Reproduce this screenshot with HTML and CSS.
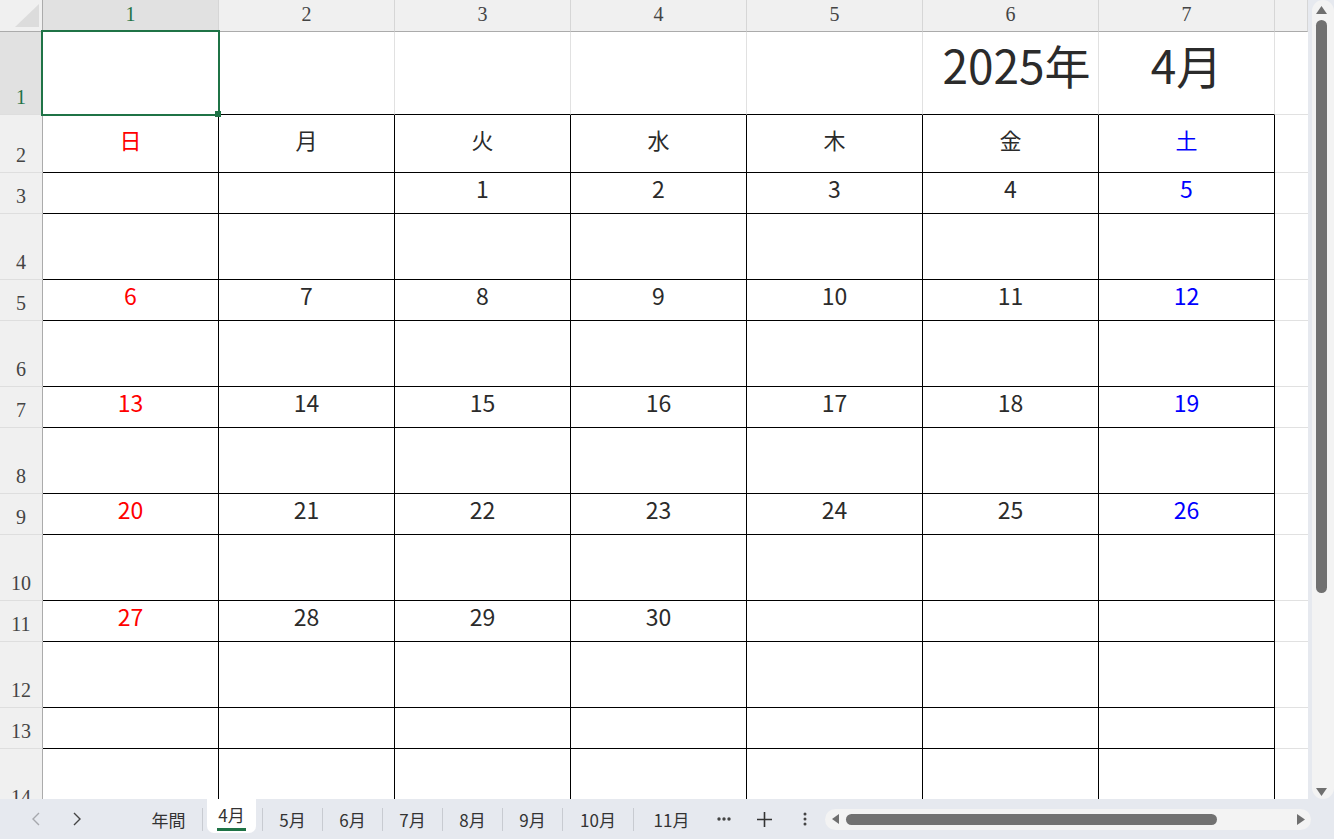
FILE: index.html
```html
<!DOCTYPE html>
<html lang="ja">
<head>
<meta charset="utf-8">
<title>カレンダー 2025年4月</title>
<link rel="stylesheet" href="styles.css">
</head>
<body>
<div class="app">
  <div class="main">
    <div class="sheet">
      <div class="corner"><svg width="24" height="23" viewBox="0 0 24 23"><polygon points="0,23 24,23 24,0" fill="#dcdcdc"/></svg></div>
      <div class="ch sel">1</div><div class="ch">2</div><div class="ch">3</div><div class="ch">4</div><div class="ch">5</div><div class="ch">6</div><div class="ch">7</div><div class="ch"></div>

      <div class="rh sel">1</div>
      <div class="c top"></div><div class="c top"></div><div class="c top"></div><div class="c top"></div><div class="c top"></div>
      <div class="c top title yr">2025年</div><div class="c top title">4月</div><div class="c x"></div>

      <div class="rh">2</div>
      <div class="c cal wd sun">日</div><div class="c cal wd">月</div><div class="c cal wd">火</div><div class="c cal wd">水</div><div class="c cal wd">木</div><div class="c cal wd">金</div><div class="c cal wd sat">土</div><div class="c x"></div>

      <div class="rh">3</div>
      <div class="c cal day"></div><div class="c cal day"></div><div class="c cal day">1</div><div class="c cal day">2</div><div class="c cal day">3</div><div class="c cal day">4</div><div class="c cal day sat">5</div><div class="c x"></div>

      <div class="rh">4</div>
      <div class="c cal"></div><div class="c cal"></div><div class="c cal"></div><div class="c cal"></div><div class="c cal"></div><div class="c cal"></div><div class="c cal"></div><div class="c x"></div>

      <div class="rh">5</div>
      <div class="c cal day sun">6</div><div class="c cal day">7</div><div class="c cal day">8</div><div class="c cal day">9</div><div class="c cal day">10</div><div class="c cal day">11</div><div class="c cal day sat">12</div><div class="c x"></div>

      <div class="rh">6</div>
      <div class="c cal"></div><div class="c cal"></div><div class="c cal"></div><div class="c cal"></div><div class="c cal"></div><div class="c cal"></div><div class="c cal"></div><div class="c x"></div>

      <div class="rh">7</div>
      <div class="c cal day sun">13</div><div class="c cal day">14</div><div class="c cal day">15</div><div class="c cal day">16</div><div class="c cal day">17</div><div class="c cal day">18</div><div class="c cal day sat">19</div><div class="c x"></div>

      <div class="rh">8</div>
      <div class="c cal"></div><div class="c cal"></div><div class="c cal"></div><div class="c cal"></div><div class="c cal"></div><div class="c cal"></div><div class="c cal"></div><div class="c x"></div>

      <div class="rh">9</div>
      <div class="c cal day sun">20</div><div class="c cal day">21</div><div class="c cal day">22</div><div class="c cal day">23</div><div class="c cal day">24</div><div class="c cal day">25</div><div class="c cal day sat">26</div><div class="c x"></div>

      <div class="rh">10</div>
      <div class="c cal"></div><div class="c cal"></div><div class="c cal"></div><div class="c cal"></div><div class="c cal"></div><div class="c cal"></div><div class="c cal"></div><div class="c x"></div>

      <div class="rh">11</div>
      <div class="c cal day sun">27</div><div class="c cal day">28</div><div class="c cal day">29</div><div class="c cal day">30</div><div class="c cal day"></div><div class="c cal day"></div><div class="c cal day"></div><div class="c x"></div>

      <div class="rh">12</div>
      <div class="c cal"></div><div class="c cal"></div><div class="c cal"></div><div class="c cal"></div><div class="c cal"></div><div class="c cal"></div><div class="c cal"></div><div class="c x"></div>

      <div class="rh">13</div>
      <div class="c cal"></div><div class="c cal"></div><div class="c cal"></div><div class="c cal"></div><div class="c cal"></div><div class="c cal"></div><div class="c cal"></div><div class="c x"></div>

      <div class="rh">14</div>
      <div class="c cal"></div><div class="c cal"></div><div class="c cal"></div><div class="c cal"></div><div class="c cal"></div><div class="c cal"></div><div class="c cal"></div><div class="c x"></div>

      <div class="selbox"><div class="handle"></div></div>
    </div>
    <div class="vscroll">
      <div class="vtrack">
        <svg class="varrow up" width="11" height="8" viewBox="0 0 11 8"><polygon points="0,8 5.5,0 11,8" fill="#6f6f6f"/></svg>
        <div class="vthumb"></div>
        <svg class="varrow down" width="11" height="8" viewBox="0 0 11 8"><polygon points="0,0 11,0 5.5,8" fill="#6f6f6f"/></svg>
      </div>
    </div>
  </div>
  <div class="tabbar">
    <div class="nav">
      <svg class="chev" width="10" height="14" viewBox="0 0 10 14"><polyline points="8,1 2,7 8,13" fill="none" stroke="#a6a8ad" stroke-width="1.4"/></svg>
      <svg class="chev" width="10" height="14" viewBox="0 0 10 14"><polyline points="2,1 8,7 2,13" fill="none" stroke="#444" stroke-width="1.4"/></svg>
    </div>
    <div class="tab first">年間</div>
    <div class="sep"></div>
    <div class="tab active">4月</div>
    <div class="sep"></div>
    <div class="tab">5月</div>
    <div class="sep"></div>
    <div class="tab">6月</div>
    <div class="sep"></div>
    <div class="tab">7月</div>
    <div class="sep"></div>
    <div class="tab">8月</div>
    <div class="sep"></div>
    <div class="tab">9月</div>
    <div class="sep"></div>
    <div class="tab wide">10月</div>
    <div class="sep"></div>
    <div class="tab wider">11月</div>
    <div class="btn more"><svg width="14" height="4" viewBox="0 0 14 4"><circle cx="2" cy="2" r="1.7" fill="#444"/><circle cx="7" cy="2" r="1.7" fill="#444"/><circle cx="12" cy="2" r="1.7" fill="#444"/></svg></div>
    <div class="btn plus"><svg width="15" height="15" viewBox="0 0 15 15"><path d="M7.5 0V15M0 7.5H15" stroke="#333" stroke-width="1.6"/></svg></div>
    <div class="btn kebab"><svg width="4" height="14" viewBox="0 0 4 14"><circle cx="2" cy="2" r="1.5" fill="#444"/><circle cx="2" cy="7" r="1.5" fill="#444"/><circle cx="2" cy="12" r="1.5" fill="#444"/></svg></div>
    <div class="hscroll">
      <svg class="harrow" width="7" height="10" viewBox="0 0 7 10"><polygon points="7,0 7,10 0,5" fill="#6f6f6f"/></svg>
      <div class="hthumb"></div>
      <svg class="harrow right" width="8" height="11" viewBox="0 0 8 11"><polygon points="0,0 8,5.5 0,11" fill="#6f6f6f"/></svg>
    </div>
  </div>
</div>
</body>
</html>
```

FILE: styles.css
```css
* { box-sizing: border-box; }
html, body { margin: 0; padding: 0; }
body {
  width: 1334px;
  height: 839px;
  overflow: hidden;
  background: #ffffff;
  font-family: "Noto Sans CJK JP", "Noto Sans", sans-serif;
}
.app { display: flex; flex-direction: column; width: 1334px; height: 839px; }
.main { display: flex; height: 799px; flex: none; }

/* sheet grid */
.sheet {
  position: relative;
  width: 1308px;
  height: 799px;
  overflow: hidden;
  display: grid;
  grid-template-columns: 43px repeat(7, 176px) 33px;
  grid-template-rows: 32px 83px 58px repeat(6, 41px 66px);
  background: #fff;
}
.corner {
  background: #f0f0f0;
  border-right: 1px solid #ababab;
  border-bottom: 1px solid #ababab;
  display: flex;
  align-items: flex-end;
  justify-content: flex-end;
  padding: 0 3px 4px 0;
}
.ch {
  background: #f0f0f0;
  border-right: 1px solid #d6d6d6;
  border-bottom: 1px solid #ababab;
  display: flex;
  align-items: center;
  justify-content: center;
  font-family: "Liberation Serif", serif;
  font-size: 20px;
  color: #444;
  padding-bottom: 2px;
}
.rh {
  background: #f0f0f0;
  border-right: 1px solid #ababab;
  border-bottom: 1px solid #dedede;
  display: flex;
  align-items: flex-end;
  justify-content: center;
  font-family: "Liberation Serif", serif;
  font-size: 20px;
  line-height: 20px;
  color: #444;
  padding-bottom: 7px;
}
.ch.sel, .rh.sel { background: #e1e1e1; color: #1f7346; }

.c {
  border-right: 1px solid #e1e1e1;
  border-bottom: 1px solid #e1e1e1;
  display: flex;
  align-items: center;
  justify-content: center;
  color: #2b2b2b;
  font-size: 22px;
  line-height: 1;
}
.c.top { border-bottom-color: #000; }
.c.cal { border-right-color: #000; border-bottom-color: #000; }
.c.x { border-right: none; }
.title { font-size: 46px; padding-bottom: 18px; }
.title.yr { padding-left: 12px; }
.wd { padding-bottom: 10px; }
.day { font-size: 23px; padding-bottom: 9px; }
.sun { color: #ff0000; }
.sat { color: #0000ff; }

.selbox {
  position: absolute;
  left: 41px;
  top: 30px;
  width: 179px;
  height: 86px;
  border: 2px solid #1f7346;
}
.handle {
  position: absolute;
  right: -3px;
  bottom: -3px;
  width: 6px;
  height: 6px;
  background: #1f7346;
}

/* vertical scrollbar */
.vscroll {
  width: 26px;
  height: 799px;
  background: #e6e9ef;
  padding-left: 4px;
}
.vtrack {
  width: 22px;
  height: 799px;
  background: #f3f3f3;
  border-radius: 11px;
  display: flex;
  flex-direction: column;
  padding: 6px 0 3px 4px;
}
.varrow { display: block; flex: none; }
.vthumb {
  width: 11px;
  height: 573px;
  margin-top: 6px;
  background: #717171;
  border-radius: 6px;
  flex: none;
}
.varrow.down { margin-top: auto; }

/* tab bar */
.tabbar {
  height: 40px;
  flex: none;
  background: #e6e9ef;
  display: flex;
  align-items: center;
  font-size: 17px;
  color: #333;
}
.nav {
  width: 135px;
  flex: none;
  display: flex;
  align-items: center;
  padding-left: 31px;
  gap: 31px;
}
.chev { display: block; }
.tab {
  width: 59px;
  flex: none;
  text-align: center;
  padding-top: 1px;
}
.tab.first { width: 67px; }
.tab.wide { width: 70px; }
.tab.wider { width: 75px; }
.tab.active {
  position: relative;
  width: 49px;
  margin: 0 6px 0 4px;
  align-self: flex-start;
  height: 34px;
  background: #fff;
  border-radius: 0 0 7px 7px;
  display: flex;
  align-items: center;
  justify-content: center;
  padding: 0 0 3px;
}
.tab.active::after {
  content: "";
  position: absolute;
  left: 10px;
  right: 10px;
  bottom: 2px;
  height: 3px;
  background: #1f7346;
}
.sep {
  width: 1px;
  height: 23px;
  background: #c8cbd1;
  flex: none;
}
.btn {
  flex: none;
  display: flex;
  align-items: center;
  justify-content: center;
}
.btn svg { display: block; }
.more { width: 30px; }
.plus { width: 50px; }
.kebab { width: 32px; }
.hscroll {
  margin-left: 4px;
  width: 486px;
  height: 21px;
  background: #f3f3f3;
  border-radius: 11px;
  display: flex;
  align-items: center;
  padding: 0 6px 0 7px;
  flex: none;
}
.harrow { display: block; flex: none; }
.hthumb {
  margin-left: 7px;
  width: 371px;
  height: 11px;
  background: #717171;
  border-radius: 6px;
  flex: none;
}
.harrow.right { margin-left: auto; }
```
